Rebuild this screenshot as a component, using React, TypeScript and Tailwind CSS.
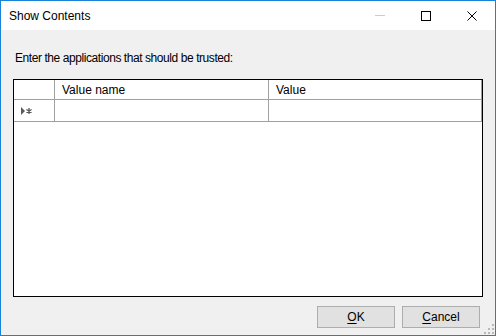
import React from 'react';

const font = { fontFamily: '"Segoe UI", "Liberation Sans", Arial, sans-serif' };

const TitleBar: React.FC = () => (
  <div className="flex h-[29px] items-center bg-white">
    <span className="ml-[8px] text-[12px] text-black">Show Contents</span>
    <div className="ml-auto flex h-full items-center">
      <div className="flex h-full w-[46px] items-center justify-center">
        <div className="h-px w-[10px] bg-[#cccccc]" />
      </div>
      <div className="flex h-full w-[46px] items-center justify-center">
        <div className="h-[10px] w-[10px] border border-black" />
      </div>
      <div className="flex h-full w-[46px] items-center justify-center">
        <svg width="10" height="10" viewBox="0 0 10 10">
          <path d="M0.5 0.5L9.5 9.5M9.5 0.5L0.5 9.5" stroke="black" strokeWidth="1" />
        </svg>
      </div>
    </div>
  </div>
);

const Grid: React.FC = () => (
  <div className="mx-[12px] h-[218px] border border-black bg-white">
    <div className="flex h-[20px] w-[468px] border-b border-[#a0a0a0]">
      <div className="w-[41px] border-r border-[#a0a0a0]" />
      <div className="w-[214px] border-r border-[#a0a0a0] pl-[7px] pt-[1px] text-[12px] text-black">Value name</div>
      <div className="w-[213px] border-r border-[#a0a0a0] pl-[7px] pt-[1px] text-[12px] text-black">Value</div>
    </div>
    <div className="flex h-[22px] w-[468px] border-b border-[#a0a0a0]">
      <div className="flex w-[41px] items-center border-r border-[#a0a0a0] pl-[6px]">
        <svg width="14" height="8" viewBox="0 0 14 8">
          <path d="M1 0L5 4L1 8Z" fill="#5a5a5a" />
          <path d="M9 1V7M6.4 2.5L11.6 5.5M6.4 5.5L11.6 2.5" stroke="#5a5a5a" strokeWidth="1.3" />
        </svg>
      </div>
      <div className="w-[214px] border-r border-[#a0a0a0]" />
      <div className="w-[213px] border-r border-[#a0a0a0]" />
    </div>
  </div>
);

const Button: React.FC<{ first: string; rest: string }> = ({ first, rest }) => (
  <button className="flex h-[22px] w-[78px] items-center justify-center border border-[#adadad] bg-[#e1e1e1] text-[12px] text-black">
    <span className="underline underline-offset-2">{first}</span>
    {rest}
  </button>
);

export default function App() {
  return (
    <div style={font} className="flex h-[336px] w-[496px] flex-col border border-[#1883d7] bg-[#f0f0f0]">
      <TitleBar />
      <div className="relative flex flex-1 flex-col">
        <div className="ml-[14px] mt-[20px] h-[16px] text-[12px] leading-[16px] tracking-[-0.43px] text-black">
          Enter the applications that should be trusted:
        </div>
        <div className="mt-[13px]">
          <Grid />
        </div>
        <div className="mr-[15px] mt-[9px] flex justify-end gap-[7px]">
          <Button first="O" rest="K" />
          <Button first="C" rest="ancel" />
        </div>
        <svg className="absolute bottom-[1px] right-[1px]" width="10" height="10" viewBox="0 0 10 10">
          <rect x="8" y="0" width="2" height="2" fill="#b8b8b8" />
          <rect x="4" y="4" width="2" height="2" fill="#b8b8b8" />
          <rect x="8" y="4" width="2" height="2" fill="#b8b8b8" />
          <rect x="0" y="8" width="2" height="2" fill="#b8b8b8" />
          <rect x="4" y="8" width="2" height="2" fill="#b8b8b8" />
          <rect x="8" y="8" width="2" height="2" fill="#b8b8b8" />
        </svg>
      </div>
    </div>
  );
}
